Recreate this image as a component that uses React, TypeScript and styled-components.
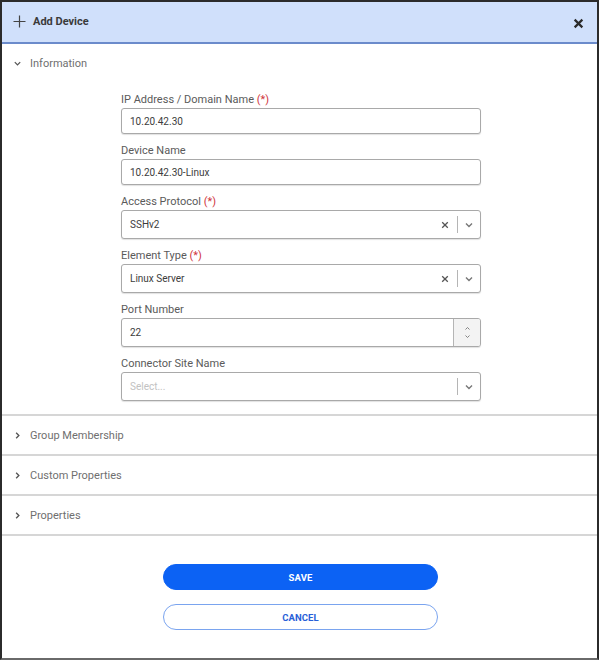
import React from 'react';
import styled, { createGlobalStyle } from 'styled-components';

const GlobalStyle = createGlobalStyle`
  html, body { margin: 0; padding: 0; background: #fff; }
  body { font-family: Roboto, "Liberation Sans", Arial, sans-serif; }
  * { box-sizing: border-box; }
`;

const Frame = styled.div`
  width: 599px;
  height: 660px;
  border: 2px solid #2b2b2b;
  border-bottom-color: #6a6a6a;
  display: flex;
  flex-direction: column;
  background: #fff;
  overflow: hidden;
`;

const Header = styled.div`
  height: 42px;
  flex: none;
  background: #d0e0fb;
  border-bottom: 2px solid #6b8bcb;
  display: flex;
  align-items: center;
  padding: 0 12px 0 11px;
`;

const Title = styled.div`
  flex: 1;
  display: flex;
  align-items: center;
  gap: 7px;
  font-size: 11px;
  font-weight: 700;
  color: #3a3a3a;
  padding-bottom: 2px;
`;

const CloseBtn = styled.div`
  width: 14px;
  height: 14px;
  display: flex;
  align-items: center;
  justify-content: center;
  margin-top: 3px;
`;

const Section = styled.div`
  border-bottom: 2px solid #d6d6d6;
`;

const SectionHead = styled.div`
  height: 38px;
  display: flex;
  align-items: center;
  gap: 8px;
  padding-left: 11px;
  padding-top: 1px;
  font-size: 11px;
  color: #6f6f6f;
`;

const Form = styled.div`
  width: 360px;
  margin-left: 119px;
  padding-top: 11px;
  padding-bottom: 3px;
  display: flex;
  flex-direction: column;
`;

const Field = styled.div`
  display: flex;
  flex-direction: column;
  margin-bottom: 10px;
`;

const Label = styled.div`
  font-size: 11px;
  color: #5a5a5a;
  line-height: 13px;
  margin-bottom: 2px;
`;

const Req = styled.span`
  color: #d0353d;
`;

const Box = styled.div<{ $tall?: boolean }>`
  height: ${p => (p.$tall ? '29px' : '26px')};
  border: 1px solid #a9a9a9;
  border-radius: 3px;
  box-shadow: 0 1px 1px rgba(0, 0, 0, 0.12);
  display: flex;
  align-items: center;
  background: #fff;
  overflow: hidden;
`;

const Value = styled.div<{ $placeholder?: boolean }>`
  flex: 1;
  padding-left: 8px;
  font-size: 10px;
  color: ${p => (p.$placeholder ? '#c2c2c2' : '#3c3c3c')};
`;

const Indicators = styled.div`
  display: flex;
  align-items: center;
  height: 100%;
  padding-right: 6px;
`;

const ClearX = styled.div`
  width: 16px;
  display: flex;
  justify-content: center;
  margin-right: 4px;
`;

const Sep = styled.div`
  width: 1px;
  height: 17px;
  background: #b5b5b5;
  margin-right: 6px;
`;

const Spinner = styled.div`
  width: 27px;
  height: 100%;
  border-left: 1px solid #b5b5b5;
  background: #f3f3f3;
  display: flex;
  flex-direction: column;
  align-items: center;
  justify-content: center;
  gap: 5px;
`;

const Buttons = styled.div`
  display: flex;
  flex-direction: column;
  align-items: center;
  gap: 14px;
  padding-top: 28px;
  padding-left: 2px;
`;

const Button = styled.div<{ $primary?: boolean }>`
  width: 275px;
  height: 26px;
  border-radius: 13px;
  display: flex;
  align-items: center;
  justify-content: center;
  font-size: 9.5px;
  font-weight: 700;
  letter-spacing: 0.1px;
  background: ${p => (p.$primary ? '#0c62f4' : '#fff')};
  color: ${p => (p.$primary ? '#fff' : '#2760d8')};
  border: 1px solid ${p => (p.$primary ? '#0c62f4' : '#7aa4ef')};
`;

const ChevDown = ({ c = '#666', s = 9 }: { c?: string; s?: number }) => (
  <svg width={s} height={s} viewBox="0 0 10 10">
    <path d="M2 3.5 L5 6.5 L8 3.5" fill="none" stroke={c} strokeWidth="1.4" />
  </svg>
);

const ChevRight = () => (
  <svg width="9" height="9" viewBox="0 0 10 10">
    <path d="M3.5 2 L6.5 5 L3.5 8" fill="none" stroke="#555" strokeWidth="1.5" />
  </svg>
);

const Times = ({ s = 8, c = '#555', w = 1.5 }: { s?: number; c?: string; w?: number }) => (
  <svg width={s} height={s} viewBox="0 0 10 10">
    <path d="M1.5 1.5 L8.5 8.5 M8.5 1.5 L1.5 8.5" stroke={c} strokeWidth={w} />
  </svg>
);

const SelectBox = ({ value, clearable = true, placeholder }: { value: string; clearable?: boolean; placeholder?: boolean }) => (
  <Box $tall>
    <Value $placeholder={placeholder}>{value}</Value>
    <Indicators>
      {clearable && (
        <ClearX>
          <Times s={8} c="#555" w={1.6} />
        </ClearX>
      )}
      <Sep />
      <ChevDown c="#777" s={10} />
    </Indicators>
  </Box>
);

const ClosedSection = ({ title }: { title: string }) => (
  <Section>
    <SectionHead>
      <ChevRight />
      {title}
    </SectionHead>
  </Section>
);

export default function App() {
  return (
    <>
      <GlobalStyle />
      <Frame>
        <Header>
          <Title>
            <svg width="13" height="13" viewBox="0 0 13 13">
              <path d="M6.5 0.5 V12.5 M0.5 6.5 H12.5" stroke="#444" strokeWidth="1.2" />
            </svg>
            Add Device
          </Title>
          <CloseBtn>
            <Times s={11} c="#2a2a2a" w={2} />
          </CloseBtn>
        </Header>

        <Section>
          <SectionHead>
            <ChevDown c="#555" s={9} />
            Information
          </SectionHead>
          <Form>
            <Field>
              <Label>
                IP Address / Domain Name <Req>(*)</Req>
              </Label>
              <Box>
                <Value>10.20.42.30</Value>
              </Box>
            </Field>
            <Field>
              <Label>Device Name</Label>
              <Box>
                <Value>10.20.42.30-Linux</Value>
              </Box>
            </Field>
            <Field>
              <Label>
                Access Protocol <Req>(*)</Req>
              </Label>
              <SelectBox value="SSHv2" />
            </Field>
            <Field>
              <Label>
                Element Type <Req>(*)</Req>
              </Label>
              <SelectBox value="Linux Server" />
            </Field>
            <Field>
              <Label>Port Number</Label>
              <Box $tall>
                <Value>22</Value>
                <Spinner>
                  <svg width="5" height="3" viewBox="0 0 5 3">
                    <path d="M0.5 2.5 L2.5 0.5 L4.5 2.5" fill="none" stroke="#777" strokeWidth="0.9" />
                  </svg>
                  <svg width="5" height="3" viewBox="0 0 5 3">
                    <path d="M0.5 0.5 L2.5 2.5 L4.5 0.5" fill="none" stroke="#777" strokeWidth="0.9" />
                  </svg>
                </Spinner>
              </Box>
            </Field>
            <Field>
              <Label>Connector Site Name</Label>
              <SelectBox value="Select..." clearable={false} placeholder />
            </Field>
          </Form>
        </Section>

        <ClosedSection title="Group Membership" />
        <ClosedSection title="Custom Properties" />
        <ClosedSection title="Properties" />

        <Buttons>
          <Button $primary>SAVE</Button>
          <Button>CANCEL</Button>
        </Buttons>
      </Frame>
    </>
  );
}
